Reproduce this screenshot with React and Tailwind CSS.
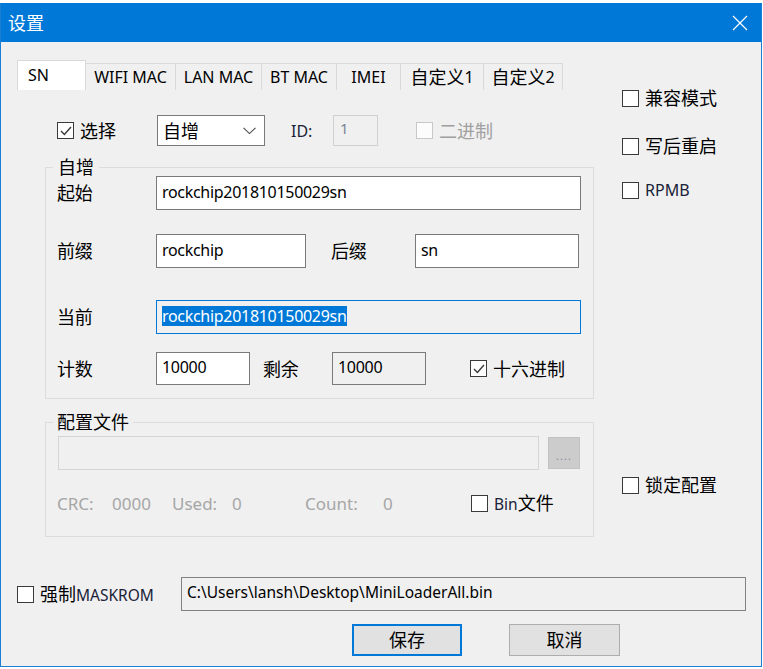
import React from 'react'

const FONT = "font-['Noto_Sans','Noto_Sans_CJK_SC',sans-serif]"

function Box({ checked, disabled }) {
  return (
    <span
      className={`w-[17px] h-[17px] shrink-0 border-[1.5px] flex items-center justify-center ${
        disabled ? 'border-[#c8c8c8] bg-[#fcfcfc]' : 'border-[#3a3a3a] bg-white'
      }`}
    >
      {checked && (
        <svg width="14" height="14" viewBox="0 0 14 14">
          <path d="M2 7 L5.4 10.4 L12 3" fill="none" stroke="#3a3a3a" strokeWidth="1.4" />
        </svg>
      )}
    </span>
  )
}

function Check({ checked, disabled, children, className = '' }) {
  return (
    <div className={`flex items-center gap-[6px] ${className}`}>
      <Box checked={checked} disabled={disabled} />
      <span className={`leading-none whitespace-nowrap ${disabled ? 'text-[#a0a0a0]' : 'text-black'}`}>{children}</span>
    </div>
  )
}

const Cjk = ({ children }) => <span className="text-[18px] leading-none">{children}</span>
const Lat = ({ children }) => <span className="text-[15.5px] leading-none text-[#1a2238]">{children}</span>

function Tab({ className, children }) {
  return (
    <div className={`h-[27px] border-t border-r border-[#d9d9d9] flex items-center justify-center text-[16px] leading-none whitespace-nowrap ${className}`}>
      {children}
    </div>
  )
}

function Label({ className = 'w-[99px]', children }) {
  return <div className={`shrink-0 text-[18px] leading-none ${className}`}>{children}</div>
}

export default function App() {
  return (
    <div className={`w-[763px] h-[669px] bg-white pt-[3px] ${FONT}`}>
      <div className="w-[762px] h-[664px] flex flex-col border-x border-b border-[#1a7fd4]">
        {/* title bar */}
        <div className="h-[39px] shrink-0 bg-[#0078d7] flex items-center justify-between pl-[7px] pr-[13px]">
          <span className="text-white text-[18px] leading-none">设置</span>
          <svg width="16" height="16" viewBox="0 0 16 16">
            <path d="M1 1 L15 15 M15 1 L1 15" stroke="white" strokeWidth="1.2" />
          </svg>
        </div>

        <div className="flex-1 bg-[#f0f0f0] pl-[16px]">
          <div className="flex items-start">
            {/* left column */}
            <div className="w-[577px] mt-[18px] shrink-0">
              <div className="flex items-end h-[30px]">
                <div className="w-[69px] h-[30px] bg-white border-x border-t border-[#d9d9d9] pl-[10px] pt-[6px] text-[16px] leading-none">
                  SN
                </div>
                <Tab className="w-[90px]">WIFI MAC</Tab>
                <Tab className="w-[86px]">LAN MAC</Tab>
                <Tab className="w-[75px]">BT MAC</Tab>
                <Tab className="w-[64px]">IMEI</Tab>
                <Tab className="w-[83px]">
                  <Cjk>自定义</Cjk>1
                </Tab>
                <Tab className="w-[79px]">
                  <Cjk>自定义</Cjk>2
                </Tab>
              </div>

              <div className="mt-[25px] h-[31px] flex items-center pl-[40px]">
                <Check checked className="w-[100px] shrink-0">
                  <Cjk>选择</Cjk>
                </Check>
                <div className="w-[108px] h-[31px] border border-[#7a7a7a] bg-white flex items-center justify-between pl-[5px] pr-[8px]">
                  <Cjk>自增</Cjk>
                  <svg width="13" height="8" viewBox="0 0 13 8">
                    <path d="M0.5 0.8 L6.5 6.6 L12.5 0.8" fill="none" stroke="#4a4a4a" strokeWidth="1.1" />
                  </svg>
                </div>
                <div className="ml-[26px] w-[42px]">
                  <span className="text-[16px] leading-none text-[#1a2238]">ID:</span>
                </div>
                <div className="w-[45px] h-[31px] border border-[#d0d0d0] bg-[#f0f0f0] flex items-center pl-[6px] pb-[4px] text-[15px] text-[#7a8594]">
                  1
                </div>
                <Check disabled className="ml-[38px]">
                  <Cjk>二进制</Cjk>
                </Check>
              </div>

              <fieldset className="mt-[12px] ml-[28px] w-[549px] border border-[#dcdcdc] p-0">
                <legend className="ml-[7px] px-[5px] text-[18px] leading-[18px]">自增</legend>
                <div className="pl-[11px] pb-[13px] tracking-[-0.3px]">
                  <div className="h-[34px] flex items-center">
                    <Label>起始</Label>
                    <div className="w-[425px] h-[34px] border border-[#7a7a7a] bg-white flex items-center pl-[5px] pb-[3px] text-[16px]">
                      rockchip201810150029sn
                    </div>
                  </div>
                  <div className="mt-[24px] h-[34px] flex items-center">
                    <Label>前缀</Label>
                    <div className="w-[150px] h-[34px] border border-[#7a7a7a] bg-white flex items-center pl-[5px] pb-[3px] text-[16px]">
                      rockchip
                    </div>
                    <Label className="ml-[25px] w-[84px]">后缀</Label>
                    <div className="w-[164px] h-[34px] border border-[#7a7a7a] bg-white flex items-center pl-[5px] pb-[3px] text-[16px]">
                      sn
                    </div>
                  </div>
                  <div className="mt-[32px] h-[34px] flex items-center">
                    <Label>当前</Label>
                    <div className="w-[425px] h-[34px] border border-[#0078d7] bg-[#f0f0f0] flex items-center pl-[5px] pb-[3px] text-[16px]">
                      <span className="bg-[#0078d7] text-white leading-[20px]">rockchip201810150029sn</span>
                    </div>
                  </div>
                  <div className="mt-[18px] h-[33px] flex items-center">
                    <Label>计数</Label>
                    <div className="w-[94px] h-[33px] border border-[#7a7a7a] bg-white flex items-center pl-[5px] pb-[4px] text-[16px]">
                      10000
                    </div>
                    <Label className="ml-[13px] w-[69px]">剩余</Label>
                    <div className="w-[94px] h-[33px] border border-[#7a7a7a] bg-[#f0f0f0] flex items-center pl-[5px] pb-[4px] text-[16px]">
                      10000
                    </div>
                    <Check checked className="ml-[44px] tracking-normal">
                      <Cjk>十六进制</Cjk>
                    </Check>
                  </div>
                </div>
              </fieldset>

              <fieldset className="mt-[14px] ml-[28px] w-[549px] border border-[#dcdcdc] p-0">
                <legend className="ml-[7px] px-[4px] text-[18px] leading-[18px]">配置文件</legend>
                <div className="pl-[12px] pb-[20px]">
                  <div className="mt-[5px] flex items-center">
                    <div className="w-[481px] h-[34px] border border-[#d4d4d4] bg-[#f0f0f0]" />
                    <div className="ml-[9px] w-[32px] h-[32px] border border-[#c2c2c2] bg-[#cccccc] flex items-center justify-center pt-[4px] text-[11px] leading-none text-[#8a8aa0] tracking-[1px]">
                      ....
                    </div>
                  </div>
                  <div className="mt-[20px] h-[26px] flex items-center text-[17px] leading-none text-[#a6a6a6] whitespace-nowrap">
                    <span className="w-[55px] -ml-[1px]">CRC:</span>
                    <span className="w-[60px]">0000</span>
                    <span className="w-[60px]">Used:</span>
                    <span className="w-[73px]">0</span>
                    <span className="w-[78px]">Count:</span>
                    <span className="w-[88px]">0</span>
                    <Check>
                      <Lat>Bin</Lat>
                      <Cjk>文件</Cjk>
                    </Check>
                  </div>
                </div>
              </fieldset>
            </div>

            {/* right column */}
            <div className="ml-[28px] mt-[44px] flex flex-col">
              <Check className="h-[24px]">
                <Cjk>兼容模式</Cjk>
              </Check>
              <Check className="h-[24px] mt-[24px]">
                <Cjk>写后重启</Cjk>
              </Check>
              <Check className="h-[24px] mt-[20px]">
                <span className="text-[16px] leading-none text-[#1a2238]">RPMB</span>
              </Check>
              <Check className="h-[24px] mt-[271px]">
                <Cjk>锁定配置</Cjk>
              </Check>
            </div>
          </div>

          <div className="mt-[40px] h-[34px] flex items-center">
            <Check className="w-[164px] shrink-0">
              <Cjk>强制</Cjk>
              <Lat>MASKROM</Lat>
            </Check>
            <div className="w-[565px] h-[34px] border border-[#828282] bg-[#f0f0f0] flex items-center pl-[5px] pb-[3px] text-[15.5px] whitespace-nowrap">
              C:\Users\lansh\Desktop\MiniLoaderAll.bin
            </div>
          </div>

          <div className="mt-[13px] flex pl-[335px]">
            <div className="w-[110px] h-[32px] border-2 border-[#0078d7] bg-[#e1e1e1] flex items-center justify-center">
              <Cjk>保存</Cjk>
            </div>
            <div className="ml-[47px] w-[111px] h-[32px] border border-[#adadad] bg-[#e1e1e1] flex items-center justify-center">
              <Cjk>取消</Cjk>
            </div>
          </div>
        </div>
      </div>
    </div>
  )
}
